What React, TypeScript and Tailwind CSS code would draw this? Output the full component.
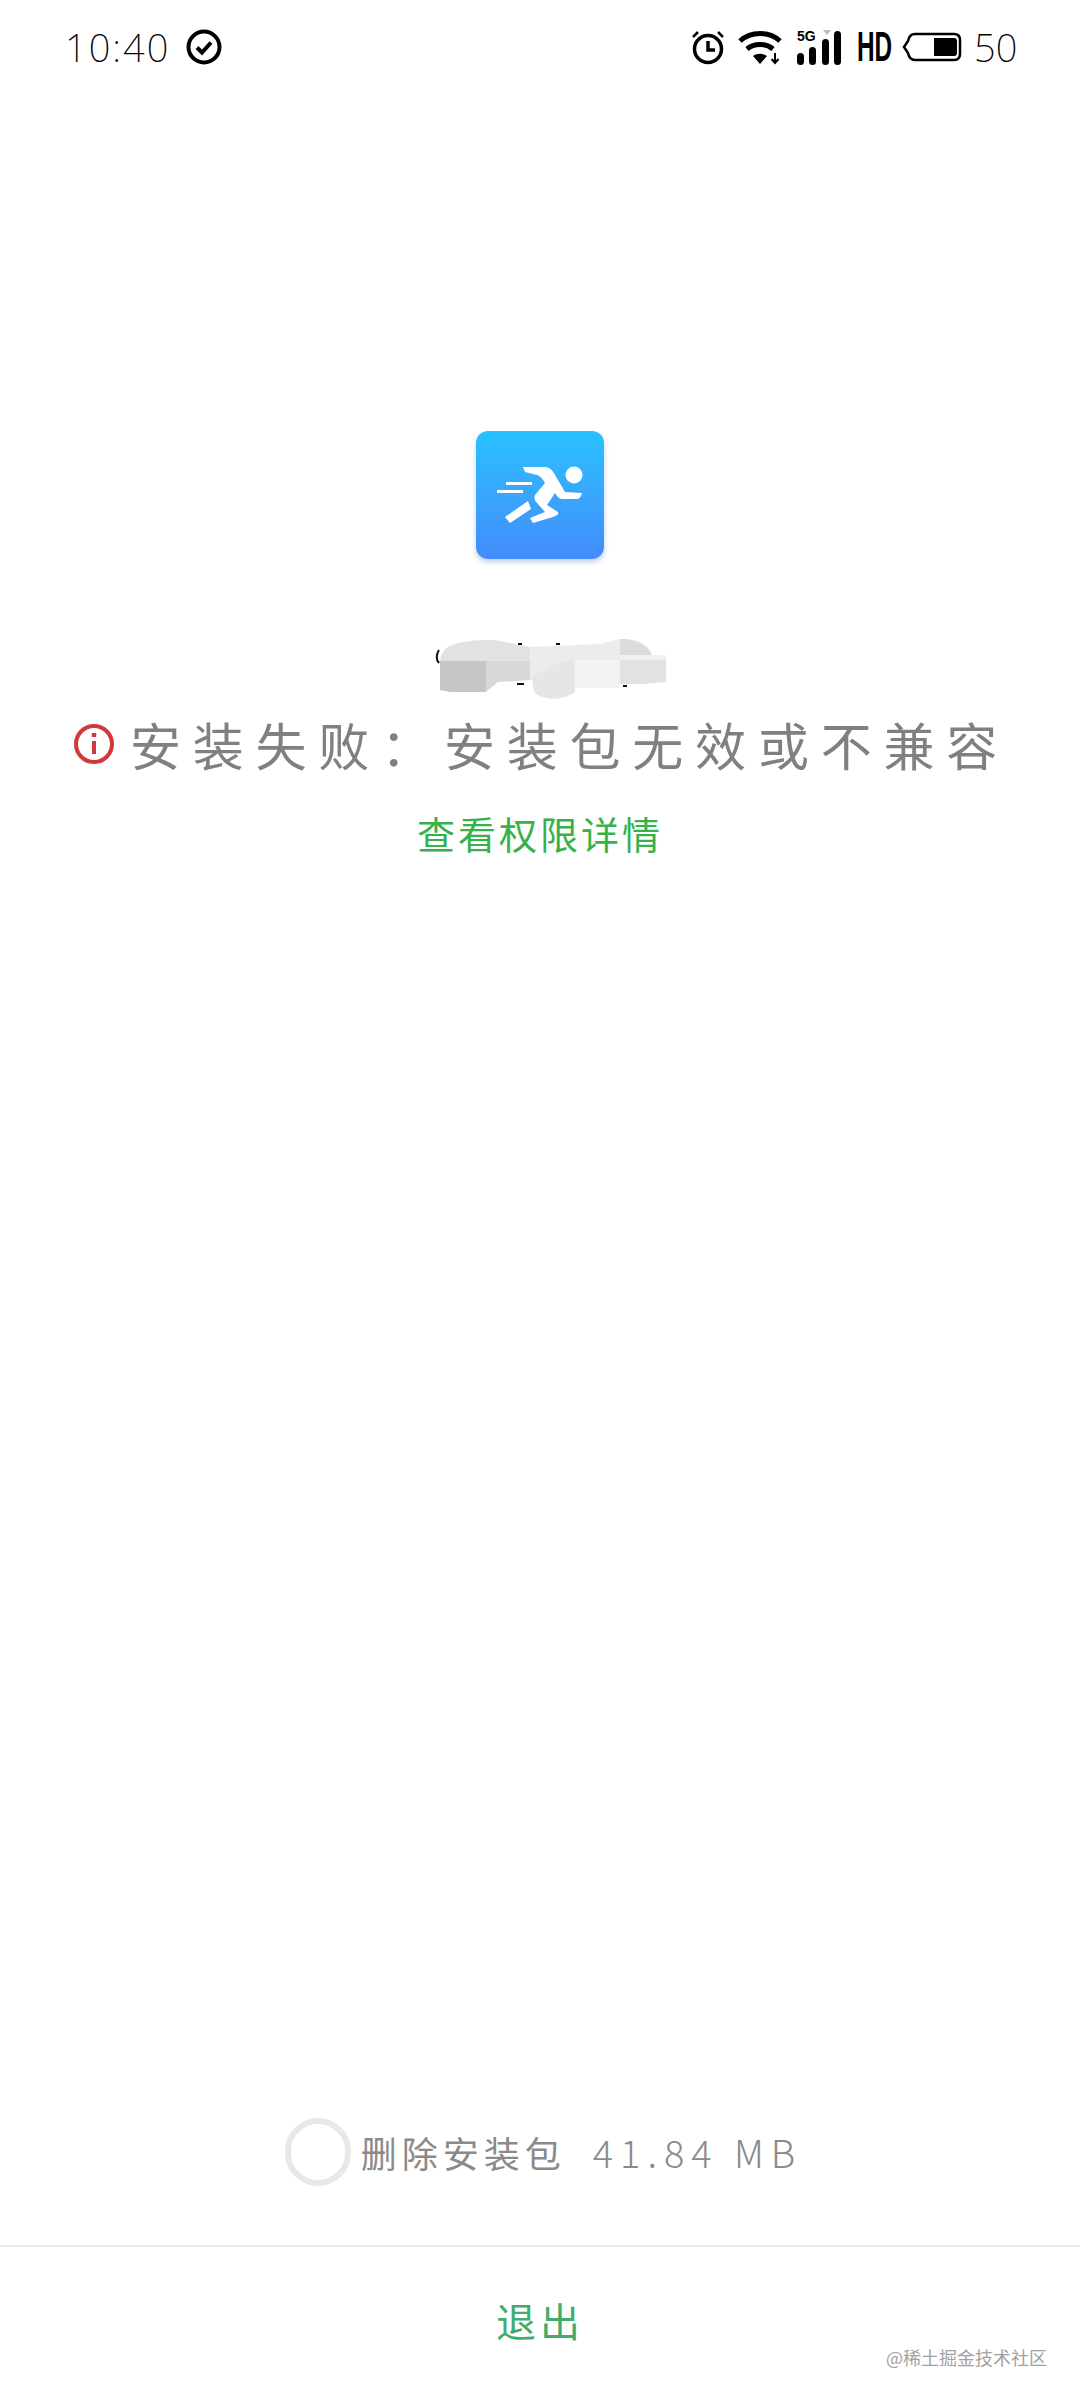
const cjk = "font-['Noto_Sans_CJK_SC','Noto_Sans',sans-serif]";

function StatusBar() {
  return (
    <div className="flex h-[94px] items-center justify-between pl-[65px] pr-[62px] text-black">
      <div className="flex items-center gap-[14px]">
        <span className="w-[107px] font-['Noto_Sans',sans-serif] text-[38px] leading-none font-extralight tracking-[2px]">10:40</span>
        <svg viewBox="0 0 36 36" className="h-[36px] w-[36px]" fill="none" stroke="currentColor">
          <circle cx="18" cy="18" r="15.5" strokeWidth="4" />
          <path d="M11 18.500l5 5 9-10" strokeWidth="4" />
        </svg>
      </div>
      <div className="flex items-center">
        <svg viewBox="0 0 36 36" className="h-[36px] w-[36px]" fill="none" stroke="currentColor">
          <circle cx="18" cy="20" r="13.500" strokeWidth="3.500" />
          <path d="M18 12v9h7" strokeWidth="3.500" />
          <path d="M3 8l5-5M33 8l-5-5" strokeWidth="2.500" />
        </svg>
        <svg viewBox="0 0 44 36" className="ml-[12px] h-[36px] w-[44px]" fill="none" stroke="currentColor">
          <path d="M2 12c11-10 29-10 40 0" strokeWidth="5" />
          <path d="M9 20c7-6 19-6 26 0" strokeWidth="5" />
          <path d="M15 27l7 8 7-8c-4-3-10-3-14 0z" fill="currentColor" stroke="none" />
          <path d="M37 24v9M33.500 30l3.500 4 3.500-4" strokeWidth="2" />
        </svg>
        <div className="relative ml-[15px] h-[36px] w-[44px]">
          <span className="absolute top-[-1px] left-0 font-['Liberation_Sans',sans-serif] text-[14px] leading-[16px] font-bold">5G</span>
          <div className="absolute top-[1px] left-[26px] h-0 w-0 border-x-[4px] border-t-[5px] border-x-transparent border-t-[#bbbbbb]" />
          <div className="absolute inset-0 flex items-end justify-between">
            <div className="h-[12px] w-[7px] rounded-full bg-black" />
            <div className="h-[18px] w-[7px] rounded-full bg-black" />
            <div className="h-[26px] w-[7px] rounded-full bg-black" />
            <div className="h-[34px] w-[7px] rounded-full bg-black" />
          </div>
        </div>
        <span className="ml-[16px] w-[36px] origin-left scale-x-[0.58] font-['Liberation_Sans',sans-serif] text-[42px] leading-none font-bold whitespace-nowrap">HD</span>
        <svg viewBox="0 0 60 30" className="ml-[9px] h-[30px] w-[60px]" fill="none" stroke="currentColor">
          <path d="M6 9C7 4 9 2 13 2H52C56 2 58 4 58 8V22C58 26 56 28 52 28H13C9 28 7 26 6 21L2 15z" strokeWidth="2.500" />
          <path d="M32 6h20c2 0 3 1 3 3v12c0 2-1 3-3 3H32z" fill="currentColor" stroke="none" />
        </svg>
        <span className="ml-[12px] w-[44px] font-['Noto_Sans',sans-serif] text-[38px] leading-none font-extralight">50</span>
      </div>
    </div>
  );
}

function AppIcon() {
  return (
    <div className="flex h-[128px] w-[128px] items-center justify-center rounded-[12px] bg-gradient-to-b from-[#27c1fe] to-[#428cfb] shadow-[0_3px_5px_rgba(70,120,200,0.35)]">
      <svg viewBox="0 0 100 90" className="h-[90px] w-[100px]" fill="#fff">
        <circle cx="84" cy="25" r="8.500" />
        <path d="M33 17H55C60 17 63 21 65 25L75 42 92 43C91 47 89 49 87 49H72C69 49 67 46 65 43L57 55 68 62C69 65 66 66 63 67L43 73 40 68 55 62 47 53C44 50 44 47 45 45L55 33C53 29 50 26 47 25L35 22z" />
        <path d="M15 67L38 51 41 59 20 73z" />
        <rect x="16" y="32" width="26" height="3" />
        <rect x="7" y="40" width="26" height="3" />
      </svg>
    </div>
  );
}

function RedactedName() {
  return (
    <svg viewBox="0 0 240 80" className="h-[80px] w-[240px]">
      <path d="M10 31C12 15 25 10 65 10L100 17V31z" fill="#e2e2e2" />
      <path d="M10 31H56V62H20L10 60z" fill="#c6c6c6" />
      <path d="M56 31H100V50L68 52 56 62z" fill="#d8d8d8" />
      <path d="M100 17L170 14 190 9V50H100z" fill="#ececec" />
      <path d="M190 9C205 8 218 14 222 25H190z" fill="#dcdcdc" />
      <path d="M145 30H190V58H145z" fill="#f3f3f3" />
      <path d="M102 48C112 38 130 32 145 30V62C130 72 112 70 104 62z" fill="#e6e6e6" />
      <path d="M190 25H236V30H190z" fill="#f0f0f0" />
      <path d="M190 30H236V52L212 54H190z" fill="#e2e2e2" />
      <path d="M9 20C6 24 6 30 9 33" fill="none" stroke="#111" strokeWidth="2" />
      <path d="M87 54h7M88 14h4M126 14h4M193 56h4" stroke="#111" strokeWidth="2" />
    </svg>
  );
}

export default function App() {
  return (
    <div className={`flex h-[2400px] w-full flex-col bg-white ${cjk}`}>
      <StatusBar />
      <div className="flex flex-1 flex-col items-center pt-[337px]">
        <AppIcon />
        <div className="mt-[71px] flex h-[80px] items-center pl-[20px]">
          <RedactedName />
        </div>
        <div className="mt-[2px] flex items-center pl-[3px]">
          <svg viewBox="0 0 40 40" className="mr-[16px] h-[40px] w-[40px]" fill="none" stroke="#d03a3a">
            <circle cx="20" cy="20" r="18" strokeWidth="4" />
            <path d="M20 17v13" strokeWidth="4" />
            <path d="M20 9v4" strokeWidth="4.500" />
          </svg>
          <span className="text-[51px] leading-[64px] font-normal tracking-[11.800px] whitespace-nowrap text-[#808080]">安装失败：安装包无效或不兼容</span>
        </div>
        <span className="mt-[34px] text-[38px] leading-[46px] font-normal tracking-[3px] text-[#35b24a]">查看权限详情</span>
      </div>
      <div className="flex items-center justify-center pb-[59px] pl-[7px]">
        <div className="h-[68px] w-[66px] rounded-full border-[6px] border-[#e8e8e8]" />
        <span className="ml-[10px] text-[36px] leading-[44px] font-normal tracking-[5px] whitespace-nowrap text-[#8a8a8a]">删除安装包</span>
        <span className="ml-[27px] text-[38px] leading-[44px] font-light tracking-[7px] whitespace-nowrap text-[#8a8a8a]">41.84 MB</span>
      </div>
      <div className="relative flex h-[155px] items-start justify-center border-t-2 border-[#e8e8e8] pt-[50px]">
        <span className="text-[40px] leading-[46px] font-normal tracking-[4px] text-[#41ad6c]">退出</span>
        <span className="absolute right-[33px] bottom-[31px] text-[18px] leading-[24px] whitespace-nowrap text-[#a2a2a2]">@稀土掘金技术社区</span>
      </div>
    </div>
  );
}
